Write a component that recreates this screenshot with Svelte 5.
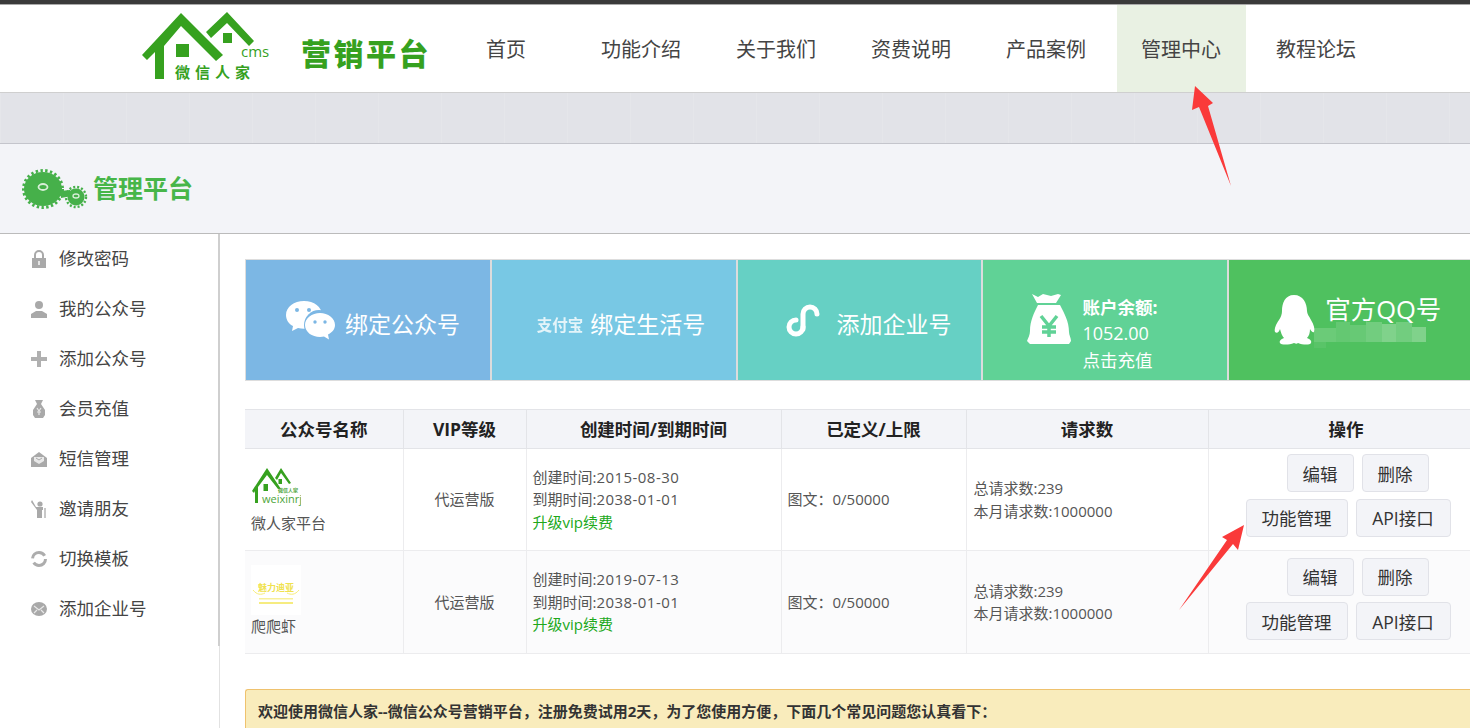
<script lang="ts">
const navItems = ["首页", "功能介绍", "关于我们", "资费说明", "产品案例", "管理中心", "教程论坛"];

const sideItems = [
  { label: "修改密码", icon: "lock" },
  { label: "我的公众号", icon: "user" },
  { label: "添加公众号", icon: "plus" },
  { label: "会员充值", icon: "bag" },
  { label: "短信管理", icon: "mail" },
  { label: "邀请朋友", icon: "wave" },
  { label: "切换模板", icon: "swap" },
  { label: "添加企业号", icon: "chat" },
];

const rows = [
  { name: "微人家平台", logo: "house", created: "2015-08-30", total: 102 },
  { name: "爬爬虾", logo: "wedding", created: "2019-07-13", total: 103 },
];

const mosaic = [
  [0, 6, 22, 14, 0.16], [22, 0, 14, 20, 0.12], [36, 3, 16, 17, 0.14], [52, 0, 16, 20, 0.2],
  [68, 2, 14, 18, 0.28], [82, 0, 16, 20, 0.2], [98, 5, 14, 15, 0.28], [0, 20, 12, 6, 0.06],
];
</script>

<div class="page">
  <div class="topline"></div>
  <header class="header">
    <svg class="logo" width="292" height="87" viewBox="0 0 292 87">
      <g fill="#36a11f">
        <polygon points="40,8 1,50 6,55 14,47 14,74 23,74 23,41 40,21 75,56 82,50" />
        <polygon points="86,7 65,27 70,33 86,18 108,41 113,36" />
        <rect x="35" y="39" width="13" height="13" />
        <rect x="82" y="28" width="9" height="10" />
      </g>
      <text x="100" y="52" class="cms">cms</text>
      <text x="34" y="73" class="brand">微信人家</text>
      <text x="160" y="60" class="slogan">营销平台</text>
    </svg>
    <nav class="nav">
      {#each navItems as item}
        <a class="nav-item" class:active={item === "管理中心"} href="#top">{item}</a>
      {/each}
    </nav>
  </header>
  <div class="band"></div>
  <div class="title-bar">
    <svg width="66" height="44" viewBox="0 0 66 44">
      <ellipse cx="21" cy="22" rx="19" ry="17" fill="#46b04a" />
      <ellipse cx="21" cy="22" rx="19.500" ry="18.500" fill="none" stroke="#46b04a" stroke-width="3" stroke-dasharray="2.400 2.400" />
      <ellipse cx="21" cy="20" rx="4.500" ry="3" fill="none" stroke="#d8eed8" stroke-width="1.800" />
      <path d="M38 24l10-1 2 6-11 2z" fill="#46b04a" />
      <circle cx="54" cy="30" r="8.500" fill="#46b04a" />
      <circle cx="54" cy="30" r="10" fill="none" stroke="#46b04a" stroke-width="2.400" stroke-dasharray="2 2" />
      <ellipse cx="54" cy="29" rx="3" ry="2" fill="none" stroke="#d8eed8" stroke-width="1.300" />
    </svg>
    <span>管理平台</span>
  </div>

  <div class="main">
    <aside class="sidebar">
      <div class="side-list">
        {#each sideItems as s}
          <div class="side-item">
            <svg class="side-icon" width="16" height="18" viewBox="0 0 16 18">
              {#if s.icon === "lock"}
                <path d="M1 8h14v10H1z" fill="#a9a9a9" />
                <path d="M4 8V5a4 4 0 0 1 8 0v3" fill="none" stroke="#a9a9a9" stroke-width="2" />
                <rect x="7" y="11" width="2" height="4" fill="#e4e4e4" />
              {:else if s.icon === "user"}
                <circle cx="8" cy="5" r="4" fill="#a9a9a9" />
                <path d="M0 18v-4l5-3h6l5 3v4z" fill="#a9a9a9" />
              {:else if s.icon === "plus"}
                <path d="M6 1h4v6h6v4h-6v6H6v-6H0V7h6z" fill="#b0b0b0" />
              {:else if s.icon === "bag"}
                <path d="M4 0h8l-2 4 4 6v5l-2 3H4l-2-3v-5l4-6z" fill="#a9a9a9" />
                <path d="M6 8l2 3 2-3M8 11v4M6 12h4" fill="none" stroke="#e8e8e8" stroke-width="1.200" />
              {:else if s.icon === "mail"}
                <path d="M0 8l8-6 8 6v9H0z" fill="#a9a9a9" />
                <path d="M3 7h10v4l-5 3-5-3z" fill="#e8e8e8" />
                <path d="M5 8l3 2 3-2" fill="none" stroke="#a9a9a9" stroke-width="1" />
              {:else if s.icon === "wave"}
                <path d="M1 0l4 7h7v3h-1v8H6v-8L0 2z" fill="#a9a9a9" />
                <circle cx="9" cy="4" r="2.600" fill="#a9a9a9" />
                <rect x="13" y="8" width="2" height="10" fill="#c8c8c8" />
              {:else if s.icon === "swap"}
                <circle cx="8" cy="9" r="6.500" fill="none" stroke="#adadad" stroke-width="3" stroke-dasharray="16 4.500" />
              {:else}
                <ellipse cx="8" cy="9" rx="8" ry="7" fill="#a9a9a9" />
                <path d="M3 6l5 4 5-4M3 13l3-3M13 13l-3-3" fill="none" stroke="#e8e8e8" stroke-width="1.200" />
              {/if}
            </svg>
            <span class="side-label">{s.label}</span>
          </div>
        {/each}
      </div>
    </aside>

    <main class="content">
      <section class="cards">
        <div class="card c1">
          <svg width="50" height="40" viewBox="0 0 50 40">
            <path d="M18 1C8 1 0 7 0 15c0 5 3 9 7 11l-1 5 6-3c2 .5 4 .7 6 .7C28 29 36 23 36 15S28 1 18 1z" fill="#fff" />
            <circle cx="33" cy="25" r="15" fill="#7cb7e4" />
            <path d="M34 13c-8 0-15 5-15 12s7 12 15 12c1.500 0 3-.2 4-.5l5 3-1-5c4-2 7-5 7-9.500 0-7-7-12-15-12z" fill="#fff" />
            <circle cx="11" cy="10" r="2" fill="#7cb7e4" /><circle cx="23" cy="10" r="2" fill="#7cb7e4" />
            <circle cx="29" cy="22" r="1.700" fill="#7cb7e4" /><circle cx="39" cy="22" r="1.700" fill="#7cb7e4" />
          </svg>
          <span class="card-label">绑定公众号</span>
        </div>
        <div class="card c2">
          <span class="alipay">支付宝</span>
          <span class="card-label">绑定生活号</span>
        </div>
        <div class="card c3">
          <svg width="37" height="36" viewBox="0 0 37 36">
            <path d="M19 27V12a7 7 0 0 1 14 0" fill="none" stroke="#fff" stroke-width="5" stroke-linecap="round" />
            <path d="M19 25a7 7 0 1 1-7-7" fill="none" stroke="#fff" stroke-width="5" stroke-linecap="round" />
          </svg>
          <span class="card-label">添加企业号</span>
        </div>
        <div class="card c4">
          <svg width="44" height="52" viewBox="0 0 44 52">
            <path d="M5 0l6 3 5-3 8 2 7-2 3 1-5 8H10z" fill="#fff" />
            <path d="M11 11h22c4 8 9 16 9 27 0 3 2 6 2 9l-2 3H3l-3-3c1-3 3-6 3-10 0-10 4-18 8-26z" fill="#fff" />
            <path d="M14 22l8 10 8-10M22 32v11M15 33h14M15 38h14" fill="none" stroke="#60d296" stroke-width="3.500" />
          </svg>
          <div class="balance">
            <b>账户余额:</b>
            <span class="amount">1052.00</span>
            <span>点击充值</span>
          </div>
        </div>
        <div class="card c5">
          <svg width="41" height="50" viewBox="0 0 41 50">
            <path d="M20 0c9 0 13 8 13 16 0 3 2 5 4 9 3 5 4 9 3 12-1 1-3-1-4-3 0 4-1 7-3 9 3 1 5 3 4 5-1 2-8 2-13 0-1 1-2 1-4 0-5 2-13 2-14 0-1-2 1-4 4-5-2-2-3-5-4-9-1 3-3 5-5 3-1-3 1-8 4-12 2-3 3-6 3-9C8 8 11 0 20 0z" fill="#fff" />
          </svg>
          <div class="qq">
            <span>官方QQ号</span>
            <div class="mosaic">
              {#each mosaic as m}
                <i style="left:{m[0]}px;top:{m[1]}px;width:{m[2]}px;height:{m[3]}px;opacity:{m[4]}"></i>
              {/each}
            </div>
          </div>
        </div>
      </section>

      <table class="table">
        <colgroup>
          <col style="width:158px" /><col style="width:123px" /><col style="width:255px" />
          <col style="width:185px" /><col style="width:242px" /><col style="width:276px" />
        </colgroup>
        <thead>
          <tr>
            <th>公众号名称</th><th>VIP等级</th><th>创建时间/到期时间</th>
            <th>已定义/上限</th><th>请求数</th><th>操作</th>
          </tr>
        </thead>
        <tbody>
          {#each rows as r, i}
            <tr class:alt={i === 1} style="height:{r.total}px">
              <td class="name-cell" class:wed={r.logo === "wedding"}>
                {#if r.logo === "house"}
                  <svg class="thumb" width="50" height="42" viewBox="0 0 50 42">
                    <g fill="#36a11f">
                      <polygon points="16,2 1,25 3,27 4,25 4,37 7,37 7,21 16,9 27,23 30,23" />
                      <polygon points="30,2 24,12 26,14 30,7 38,18 40,17" />
                      <rect x="12.500" y="18" width="4.500" height="7" /><rect x="27.500" y="13" width="3.500" height="5" />
                    </g>
                    <text x="27" y="26" class="thumb-tiny">微信人家</text>
                    <text x="11" y="37" class="thumb-word">weixinrj</text>
                  </svg>
                {:else}
                  <svg class="thumb tall" width="50" height="50" viewBox="0 0 50 50">
                    <rect width="50" height="50" fill="#fff" />
                    <path d="M2 25c4 5 8 5 12 3M48 25c-4 5-8 5-12 3" fill="none" stroke="#f8ee7a" stroke-width="1" />
                    <text x="25" y="26" class="thumb-yellow">魅力迪亚</text>
                    <rect x="8" y="33" width="34" height="1.500" fill="#f8f09a" />
                    <rect x="8" y="37" width="34" height="2" fill="#f6ec80" />
                  </svg>
                {/if}
                <div class="acct-name">{r.name}</div>
              </td>
              <td class="center">代运营版</td>
              <td class="dates">
                <div>创建时间:<span class="date">{r.created}</span></div>
                <div>到期时间:<span class="date">2038-01-01</span></div>
                <a class="renew" href="#top">升级vip续费</a>
              </td>
              <td>图文：0/50000</td>
              <td class="reqs">
                <div>总请求数:239</div>
                <div>本月请求数:1000000</div>
              </td>
              <td class="ops">
                <div class="op-row first">
                  <button class="btn w67">编辑</button>
                  <button class="btn w67">删除</button>
                </div>
                <div class="op-row">
                  <button class="btn w102">功能管理</button>
                  <button class="btn w95">API接口</button>
                </div>
              </td>
            </tr>
          {/each}
        </tbody>
      </table>

      <div class="notice">欢迎使用微信人家--微信公众号营销平台，注册免费试用2天，为了您使用方便，下面几个常见问题您认真看下：</div>
    </main>
  </div>

  <svg class="arrows" width="1470" height="728" viewBox="0 0 1470 728">
    <polygon points="1195,86 1192,110 1199,107 1231,186 1208,106 1213,103" fill="#fa3a3a" />
    <polygon points="1244,525 1222,537 1227,540 1179,610 1233,544 1238,550" fill="#fa3a3a" />
  </svg>
</div>

<style>
  :global(body) {
    margin: 0;
    background: #fff;
  }
  .page {
    position: relative;
    width: 1470px;
    height: 728px;
    overflow: hidden;
    font-family: "Open Sans", "Noto Sans CJK SC", sans-serif;
    color: #333;
  }
  .topline {
    height: 4px;
    background: #3a3a3a;
    border-bottom: 1px solid #aaa;
  }
  .header {
    display: flex;
    height: 87px;
    padding-left: 141px;
    background: #fff;
    border-bottom: 1px solid #cfcfcf;
  }
  .logo {
    flex: none;
    width: 292px;
    margin-right: 8.5px;
  }
  .cms {
    font: 15px "Open Sans", sans-serif;
    fill: #36a11f;
  }
  .brand {
    font: 700 15px "Noto Sans CJK SC", sans-serif;
    letter-spacing: 5px;
    fill: #36a11f;
  }
  .slogan {
    font: 900 30px "Noto Sans CJK SC", sans-serif;
    letter-spacing: 2.5px;
    fill: #36a11f;
  }
  .nav {
    display: flex;
    gap: 6px;
  }
  .nav-item {
    width: 129px;
    line-height: 90px;
    height: 87px;
    text-align: center;
    font-size: 20px;
    color: #444;
    text-decoration: none;
  }
  .nav-item.active {
    background: #e9f1e3;
  }
  .band {
    height: 50px;
    background-color: #e2e3e8;
    background-image: repeating-linear-gradient(90deg, #e5e6ea 0 1px, transparent 1px 63px);
    border-bottom: 1px solid #c4c5cc;
  }
  .title-bar {
    display: flex;
    align-items: center;
    gap: 5px;
    height: 89px;
    padding-left: 22px;
    background: #f3f4f8;
    border-bottom: 1px solid #bbb;
    font-size: 25px;
    font-weight: 700;
    color: #47b649;
  }
  .title-bar span {
    margin-top: -3px;
  }
  .main {
    display: flex;
  }
  .sidebar {
    flex: none;
    width: 219px;
    height: 494px;
    border-right: 1px solid #e2e2e2;
  }
  .side-list {
    width: 218px;
    height: 412px;
    border-right: 2px solid #cfcfcf;
    box-sizing: content-box;
    margin-right: -2px;
  }
  .side-item {
    display: flex;
    align-items: center;
    gap: 12px;
    height: 50px;
    padding-left: 31px;
    font-size: 17.5px;
    color: #444;
  }
  .side-label {
    margin-top: -3px;
  }
  .side-icon {
    flex: none;
  }
  .content {
    flex: none;
    width: 1239px;
    padding: 25px 0 0 25px;
  }
  .cards {
    display: flex;
    height: 120px;
    border-top: 1px solid #ddd;
    border-bottom: 1px solid #ddd;
    border-left: 1px solid #ddd;
  }
  .card {
    flex: none;
    box-sizing: border-box;
    width: 245.8px;
    display: flex;
    align-items: center;
    color: #fff;
    border-right: 2px solid #dcdcdc;
  }
  .c1 {
    background: #7cb7e4;
    padding-left: 40px;
    gap: 9px;
  }
  .c2 {
    background: #78c8e4;
    padding-left: 45px;
    gap: 7px;
  }
  .c3 {
    background: #66d0c4;
    padding-left: 46px;
    gap: 16px;
  }
  .c4 {
    background: #60d296;
    padding-left: 44px;
    gap: 11px;
  }
  .c5 {
    background: #4fc15f;
    padding-left: 45px;
    gap: 10px;
    border-right: 0;
  }
  .card-label {
    font-size: 23px;
    line-height: 30px;
    margin-top: 8px;
  }
  .alipay {
    font-size: 15.5px;
    font-weight: 700;
    margin-top: 8px;
    opacity: 0.8;
    filter: blur(0.5px);
  }
  .balance {
    display: flex;
    flex-direction: column;
    font-size: 17.5px;
    line-height: 26.5px;
    padding-top: 27px;
  }
  .amount {
    font-size: 18px;
  }
  .qq {
    font-size: 25.5px;
    line-height: 30px;
    margin-top: -2px;
  }
  .mosaic {
    position: relative;
    width: 112px;
    height: 20px;
    margin: 0 0 0 -11px;
    top: -2px;
  }
  .mosaic i {
    position: absolute;
    background: #fff;
  }
  .table {
    width: 1239px;
    margin-top: 28px;
    border-collapse: collapse;
    table-layout: fixed;
    font-size: 15px;
    color: #555;
  }
  th {
    height: 36px;
    padding: 0 0 2px;
    background: #f3f4f8;
    border: 1px solid #e3e4e8;
    border-left-color: #dcdde2;
    font-size: 17.5px;
    font-weight: 700;
    color: #222;
  }
  td {
    padding: 0 0 0 6px;
    border: 1px solid #ececee;
    line-height: 22.5px;
  }
  tr.alt td {
    background: #fbfbfc;
  }
  th:first-child,
  td:first-child {
    border-left: 0;
  }
  .center {
    padding-left: 0;
    text-align: center;
  }
  .name-cell.wed {
    padding: 0 0 4px 6px;
  }
  .thumb {
    display: block;
  }
  .thumb.tall {
    margin-bottom: -4px;
  }
  .thumb-word {
    font: 11px "Open Sans", sans-serif;
    fill: #4da53a;
  }
  .thumb-tiny {
    font: 700 5px "Noto Sans CJK SC", sans-serif;
    fill: #4da53a;
  }
  .thumb-yellow {
    font: 700 9px "Noto Sans CJK SC", sans-serif;
    fill: #f0e250;
    text-anchor: middle;
  }
  .acct-name {
    font-size: 15px;
    line-height: 20px;
    margin-top: 5px;
  }
  .date {
    letter-spacing: 0.45px;
  }
  .renew {
    color: #20a81a;
    text-decoration: none;
  }
  .reqs {
    padding-left: 7px;
  }
  .ops {
    padding: 0 0 8px 37px;
  }
  tr.alt .ops {
    padding-bottom: 6px;
  }
  .op-row {
    display: flex;
    gap: 8px;
  }
  .op-row.first {
    margin: 0 0 6.5px 41px;
  }
  .btn {
    box-sizing: border-box;
    height: 38px;
    padding: 0;
    background: #f3f4f8;
    border: 1px solid #e1e2e8;
    border-radius: 4px;
    font-family: inherit;
    font-size: 17.5px;
    color: #333;
  }
  .w67 {
    width: 67px;
  }
  .w102 {
    width: 102px;
  }
  .w95 {
    width: 95px;
  }
  .notice {
    box-sizing: border-box;
    height: 60px;
    margin-top: 35px;
    padding: 10px 0 0 12px;
    background: #f9ecbc;
    border-top: 1px solid #efc26e;
    border-left: 1px solid #efc26e;
    border-radius: 3px 0 0 0;
    font-size: 15px;
    line-height: 22px;
    font-weight: 700;
    color: #333;
  }
  .arrows {
    position: absolute;
    inset: 0;
    pointer-events: none;
  }
</style>
